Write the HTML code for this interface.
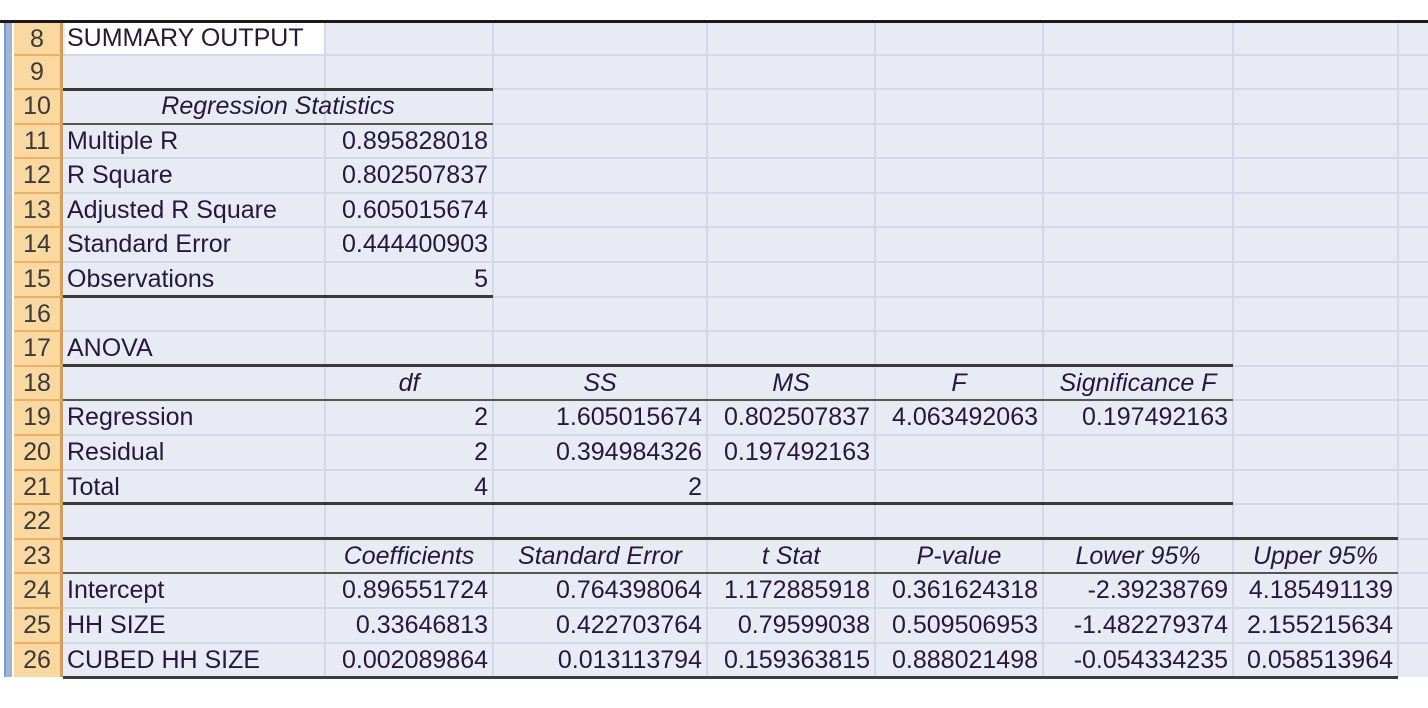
<!DOCTYPE html>
<html><head><meta charset="utf-8"><style>
*{margin:0;padding:0;box-sizing:border-box}
body{width:1428px;height:708px;background:#fff;position:relative;overflow:hidden;font-family:"Liberation Sans",Arial,sans-serif;font-size:25px;color:#24193a}
.bg{position:absolute;left:63px;top:22px;width:1365px;height:655px;background-color:#e8ebf3}
.v{position:absolute;top:22px;height:655px;width:2px;background:#d3d9e6}
.h{position:absolute;left:63px;width:1365px;height:2px;background:#d3d9e6}
.hd{position:absolute;left:14px;top:22px;width:49px;height:655px;background-color:#f9d9a0;border-right:3px solid #e49a3e}
.hh{position:absolute;left:14px;width:47px;height:2px;background:#eeb065}
.blue{position:absolute;left:4px;top:20px;width:8px;height:657px;background:#9db6d8;border-left:2px solid #7b9cc8}
.top{position:absolute;left:0;top:20px;width:1428px;height:3px;background:#1a1a1a}
.t{position:absolute;height:34px;line-height:34px;white-space:nowrap}
.n{position:absolute;left:14px;width:46px;text-align:center;height:34px;line-height:34px;color:#3a3a3a}
.L{left:67px}
.i{font-style:italic;text-align:center}
.r{text-align:right}
.th{position:absolute;height:3px;background:#3a3a3a}
.tn{position:absolute;height:2px;background:#555}
</style></head><body>
<div class="bg"></div>
<div class="v" style="left:324px"></div><div class="v" style="left:492px"></div><div class="v" style="left:706px"></div><div class="v" style="left:874px"></div><div class="v" style="left:1042px"></div><div class="v" style="left:1232px"></div><div class="v" style="left:1397px"></div>
<div class="h" style="top:54px"></div><div class="h" style="top:88px"></div><div class="h" style="top:123px"></div><div class="h" style="top:157px"></div><div class="h" style="top:192px"></div><div class="h" style="top:226px"></div><div class="h" style="top:261px"></div><div class="h" style="top:296px"></div><div class="h" style="top:330px"></div><div class="h" style="top:365px"></div><div class="h" style="top:399px"></div><div class="h" style="top:434px"></div><div class="h" style="top:469px"></div><div class="h" style="top:503px"></div><div class="h" style="top:538px"></div><div class="h" style="top:572px"></div><div class="h" style="top:607px"></div><div class="h" style="top:642px"></div>
<div style="position:absolute;left:65px;top:23px;width:259px;height:31px;background:#fff"></div>
<div class="hd"></div>
<div class="hh" style="top:54px"></div><div class="hh" style="top:88px"></div><div class="hh" style="top:123px"></div><div class="hh" style="top:157px"></div><div class="hh" style="top:192px"></div><div class="hh" style="top:226px"></div><div class="hh" style="top:261px"></div><div class="hh" style="top:296px"></div><div class="hh" style="top:330px"></div><div class="hh" style="top:365px"></div><div class="hh" style="top:399px"></div><div class="hh" style="top:434px"></div><div class="hh" style="top:469px"></div><div class="hh" style="top:503px"></div><div class="hh" style="top:538px"></div><div class="hh" style="top:572px"></div><div class="hh" style="top:607px"></div><div class="hh" style="top:642px"></div>
<div class="blue"></div><div class="top"></div>

<div class="n" style="top:22px">8</div><div class="n" style="top:55px">9</div><div class="n" style="top:89px">10</div><div class="n" style="top:124px">11</div><div class="n" style="top:158px">12</div><div class="n" style="top:193px">13</div><div class="n" style="top:227px">14</div><div class="n" style="top:262px">15</div><div class="n" style="top:297px">16</div><div class="n" style="top:331px">17</div><div class="n" style="top:366px">18</div><div class="n" style="top:400px">19</div><div class="n" style="top:435px">20</div><div class="n" style="top:470px">21</div><div class="n" style="top:504px">22</div><div class="n" style="top:539px">23</div><div class="n" style="top:573px">24</div><div class="n" style="top:608px">25</div><div class="n" style="top:643px">26</div>

<div class="th" style="left:63px;top:88px;width:430px"></div>
<div class="tn" style="left:63px;top:123px;width:430px"></div>
<div class="th" style="left:63px;top:295px;width:430px"></div>
<div class="th" style="left:63px;top:364px;width:1170px"></div>
<div class="tn" style="left:63px;top:399px;width:1170px"></div>
<div class="th" style="left:63px;top:502px;width:1170px"></div>
<div class="th" style="left:63px;top:537px;width:1335px"></div>
<div class="tn" style="left:63px;top:572px;width:1335px"></div>
<div class="th" style="left:63px;top:676px;width:1335px"></div>

<div class="t L" style="top:21px">SUMMARY OUTPUT</div>
<div class="t i" style="top:89px;left:63px;width:430px">Regression Statistics</div>
<div class="t L" style="top:124px">Multiple R</div><div class="t r" style="top:124px;left:325px;width:163px">0.895828018</div>
<div class="t L" style="top:158px">R Square</div><div class="t r" style="top:158px;left:325px;width:163px">0.802507837</div>
<div class="t L" style="top:193px">Adjusted R Square</div><div class="t r" style="top:193px;left:325px;width:163px">0.605015674</div>
<div class="t L" style="top:227px">Standard Error</div><div class="t r" style="top:227px;left:325px;width:163px">0.444400903</div>
<div class="t L" style="top:262px">Observations</div><div class="t r" style="top:262px;left:325px;width:163px">5</div>
<div class="t L" style="top:331px">ANOVA</div>

<div class="t i" style="top:366px;left:325px;width:168px">df</div>
<div class="t i" style="top:366px;left:493px;width:214px">SS</div>
<div class="t i" style="top:366px;left:707px;width:168px">MS</div>
<div class="t i" style="top:366px;left:875px;width:168px">F</div>
<div class="t i" style="top:366px;left:1043px;width:190px">Significance F</div>

<div class="t L" style="top:400px">Regression</div>
<div class="t r" style="top:400px;left:325px;width:163px">2</div>
<div class="t r" style="top:400px;left:493px;width:209px">1.605015674</div>
<div class="t r" style="top:400px;left:707px;width:163px">0.802507837</div>
<div class="t r" style="top:400px;left:875px;width:163px">4.063492063</div>
<div class="t r" style="top:400px;left:1043px;width:185px">0.197492163</div>
<div class="t L" style="top:435px">Residual</div>
<div class="t r" style="top:435px;left:325px;width:163px">2</div>
<div class="t r" style="top:435px;left:493px;width:209px">0.394984326</div>
<div class="t r" style="top:435px;left:707px;width:163px">0.197492163</div>
<div class="t L" style="top:470px">Total</div>
<div class="t r" style="top:470px;left:325px;width:163px">4</div>
<div class="t r" style="top:470px;left:493px;width:209px">2</div>

<div class="t i" style="top:539px;left:325px;width:168px">Coefficients</div>
<div class="t i" style="top:539px;left:493px;width:214px">Standard Error</div>
<div class="t i" style="top:539px;left:707px;width:168px">t Stat</div>
<div class="t i" style="top:539px;left:875px;width:168px">P-value</div>
<div class="t i" style="top:539px;left:1043px;width:190px">Lower 95%</div>
<div class="t i" style="top:539px;left:1233px;width:165px">Upper 95%</div>

<div class="t L" style="top:573px">Intercept</div>
<div class="t r" style="top:573px;left:325px;width:163px">0.896551724</div>
<div class="t r" style="top:573px;left:493px;width:209px">0.764398064</div>
<div class="t r" style="top:573px;left:707px;width:163px">1.172885918</div>
<div class="t r" style="top:573px;left:875px;width:163px">0.361624318</div>
<div class="t r" style="top:573px;left:1043px;width:185px">-2.39238769</div>
<div class="t r" style="top:573px;left:1233px;width:160px">4.185491139</div>
<div class="t L" style="top:608px">HH SIZE</div>
<div class="t r" style="top:608px;left:325px;width:163px">0.33646813</div>
<div class="t r" style="top:608px;left:493px;width:209px">0.422703764</div>
<div class="t r" style="top:608px;left:707px;width:163px">0.79599038</div>
<div class="t r" style="top:608px;left:875px;width:163px">0.509506953</div>
<div class="t r" style="top:608px;left:1043px;width:185px">-1.482279374</div>
<div class="t r" style="top:608px;left:1233px;width:160px">2.155215634</div>
<div class="t L" style="top:643px">CUBED HH SIZE</div>
<div class="t r" style="top:643px;left:325px;width:163px">0.002089864</div>
<div class="t r" style="top:643px;left:493px;width:209px">0.013113794</div>
<div class="t r" style="top:643px;left:707px;width:163px">0.159363815</div>
<div class="t r" style="top:643px;left:875px;width:163px">0.888021498</div>
<div class="t r" style="top:643px;left:1043px;width:185px">-0.054334235</div>
<div class="t r" style="top:643px;left:1233px;width:160px">0.058513964</div>
<div style="position:absolute;left:0;top:679px;width:1428px;height:29px;background:#fff"></div>
</body></html>
